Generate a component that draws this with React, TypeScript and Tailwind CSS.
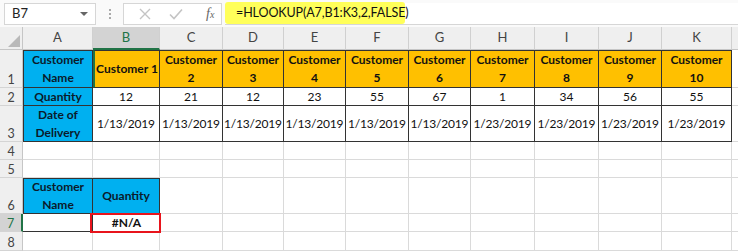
import React from 'react';

const font = { fontFamily: 'Lato, "Liberation Sans", sans-serif' };

const cols = ['A', 'B', 'C', 'D', 'E', 'F', 'G', 'H', 'I', 'J', 'K'];
const widths = ['w-[70px]', 'w-[67px]', 'w-[63px]', 'w-[61px]', 'w-[62px]', 'w-[63px]', 'w-[62px]', 'w-[64px]', 'w-[64px]', 'w-[63px]', 'w-[70px]'];

const quantities = ['12', '21', '12', '23', '55', '67', '1', '34', '56', '55'];
const dates = ['1/13/2019', '1/13/2019', '1/13/2019', '1/13/2019', '1/13/2019', '1/13/2019', '1/23/2019', '1/23/2019', '1/23/2019', '1/23/2019'];

function RowHead({ n, h, active }: { n: number; h: string; active?: boolean }) {
  return (
    <div
      className={`w-[23px] shrink-0 ${h} flex items-end justify-center pb-[1px] text-[12.5px] leading-none border-b border-[#d4d4d4] ${
        active ? 'bg-[#d3d3d3] text-[#217346] border-r-2 border-r-[#217346]' : 'bg-[#efefef] text-[#444] border-r border-r-[#c6c6c6]'
      }`}
    >
      {n}
    </div>
  );
}

function Blank({ i }: { i: number }) {
  return <div className={`${widths[i]} shrink-0 h-full border-r border-b border-[#dadada] bg-white`} />;
}

function Tail() {
  return <div className="flex-1 h-full border-b border-[#dadada] bg-white" />;
}

export default function App() {
  return (
    <div className="w-[738px] h-[251px] overflow-hidden bg-white text-[#111] whitespace-nowrap" style={font}>
      {/* formula bar */}
      <div className="h-[27px] flex items-center bg-[#fafafa]">
        <div className="ml-[4px] w-[92px] h-[22px] bg-white border border-[#d6d6d6] flex items-center justify-between px-[7px] text-[13px] text-[#222]">
          <span>B7</span>
          <span className="w-0 h-0 border-l-[4px] border-r-[4px] border-t-[4px] border-l-transparent border-r-transparent border-t-[#666]" />
        </div>
        <div className="w-[27px] flex flex-col items-center gap-[2px]">
          <span className="w-[2px] h-[2px] bg-[#aaa]" />
          <span className="w-[2px] h-[2px] bg-[#aaa]" />
          <span className="w-[2px] h-[2px] bg-[#aaa]" />
        </div>
        <div className="w-[99px] h-[22px] bg-white border border-[#d6d6d6] flex items-center">
          <svg width="14" height="14" viewBox="0 0 14 14" className="ml-[14px]">
            <path d="M2 2L12 12M12 2L2 12" stroke="#c4c4c4" strokeWidth="1.4" />
          </svg>
          <svg width="16" height="14" viewBox="0 0 16 14" className="ml-[16px]">
            <path d="M2 7.5L6 11.5L14 2.5" stroke="#c4c4c4" strokeWidth="1.6" fill="none" />
          </svg>
          <span className="ml-[22px] text-[14px] italic text-[#666]" style={{ fontFamily: '"Liberation Serif", serif' }}>
            f<span className="text-[10px]">x</span>
          </span>
        </div>
        <div className="ml-[3px] flex-1 h-[22px] bg-white border-b border-[#d6d6d6] flex items-center">
          <div className="h-[22px] w-[180px] bg-[#ffff5a] rounded-[3px] flex items-center pl-[11px] text-[12.5px] text-[#111] tracking-[-0.1px]">
            =HLOOKUP(A7,B1:K3,2,FALSE)
          </div>
        </div>
      </div>

      {/* column headers */}
      <div className="h-[23px] flex bg-[#efefef] text-[13px] text-[#444]">
        <div className="w-[23px] shrink-0 h-full border-r border-b border-[#c6c6c6] flex items-end justify-end p-[2px]">
          <svg width="12" height="12" viewBox="0 0 12 12">
            <path d="M12 0L12 12L0 12Z" fill="#b9b9b9" />
          </svg>
        </div>
        {cols.map((c, i) => (
          <div
            key={c}
            className={`${widths[i]} shrink-0 h-full flex items-center justify-center border-r border-[#d0d0d0] ${
              c === 'B' ? 'bg-[#d3d3d3] text-[#217346] border-b-2 border-b-[#217346]' : 'border-b border-b-[#c6c6c6]'
            }`}
          >
            {c}
          </div>
        ))}
        <div className="flex-1 h-full border-b border-[#c6c6c6]" />
      </div>

      {/* row 1 */}
      <div className="h-[38px] flex">
        <RowHead n={1} h="h-[38px]" />
        <div className="w-[70px] shrink-0 h-full bg-[#00b0f0] border border-[#333] flex flex-col items-center justify-center text-[12px] font-bold leading-[18px] text-[#0b1a2a]">
          <span>Customer</span>
          <span>Name</span>
        </div>
        <div className="w-[67px] shrink-0 h-full bg-[#ffc000] border-t border-r border-b border-[#333] border-l-2 border-l-[#217346] flex items-center justify-center text-[12px] font-bold">
          Customer 1
        </div>
        {cols.slice(2).map((c, k) => (
          <div
            key={c}
            className={`${widths[k + 2]} shrink-0 h-full bg-[#ffc000] border-t border-r border-b border-[#333] flex flex-col items-center justify-center text-[12px] font-bold leading-[18px]`}
          >
            <span>Customer</span>
            <span>{k + 2}</span>
          </div>
        ))}
        <Tail />
      </div>

      {/* row 2 */}
      <div className="h-[18px] flex">
        <RowHead n={2} h="h-[18px]" />
        <div className="w-[70px] shrink-0 h-full bg-[#00b0f0] border-l border-r border-b border-[#333] flex items-center justify-center text-[12px] font-bold text-[#0b1a2a]">
          Quantity
        </div>
        {quantities.map((q, k) => (
          <div key={k} className={`${widths[k + 1]} shrink-0 h-full border-r border-b border-[#333] flex items-center justify-center text-[12px]`}>
            {q}
          </div>
        ))}
        <Tail />
      </div>

      {/* row 3 */}
      <div className="h-[36px] flex">
        <RowHead n={3} h="h-[36px]" />
        <div className="w-[70px] shrink-0 h-full bg-[#00b0f0] border-l border-r border-b border-[#333] flex flex-col items-center justify-center text-[12px] font-bold leading-[18px] text-[#0b1a2a]">
          <span>Date of</span>
          <span>Delivery</span>
        </div>
        {dates.map((d, k) => (
          <div key={k} className={`${widths[k + 1]} shrink-0 h-full border-r border-b border-[#333] flex items-center justify-center text-[12px] tracking-[-0.2px]`}>
            {d}
          </div>
        ))}
        <Tail />
      </div>

      {/* rows 4, 5 */}
      {[4, 5].map(n => (
        <div key={n} className="h-[18px] flex">
          <RowHead n={n} h="h-[18px]" />
          {cols.map((c, i) => (
            <Blank key={c} i={i} />
          ))}
          <Tail />
        </div>
      ))}

      {/* row 6 */}
      <div className="h-[36px] flex">
        <RowHead n={6} h="h-[36px]" />
        <div className="w-[70px] shrink-0 h-full bg-[#00b0f0] border border-[#333] flex flex-col items-center justify-center text-[12px] font-bold leading-[18px] text-[#0b1a2a]">
          <span>Customer</span>
          <span>Name</span>
        </div>
        <div className="w-[67px] shrink-0 h-full bg-[#00b0f0] border-t border-r border-b border-[#333] flex items-center justify-center text-[12px] font-bold text-[#0b1a2a]">
          Quantity
        </div>
        {cols.slice(2).map((c, k) => (
          <Blank key={c} i={k + 2} />
        ))}
        <Tail />
      </div>

      {/* row 7 */}
      <div className="h-[18px] flex">
        <RowHead n={7} h="h-[18px]" active />
        <div className="w-[70px] shrink-0 h-full bg-white border-r border-b border-[#333]" />
        <div className="relative w-[67px] shrink-0 h-full bg-white flex items-center justify-center text-[12px] font-bold">
          <div className="absolute -left-[3px] -top-[1px] -right-[1px] -bottom-[1px] border-2 border-[#e8141c]" />
          #N/A
        </div>
        {cols.slice(2).map((c, k) => (
          <Blank key={c} i={k + 2} />
        ))}
        <Tail />
      </div>

      {/* row 8 */}
      <div className="h-[19px] flex">
        <RowHead n={8} h="h-[19px]" />
        {cols.map((c, i) => (
          <Blank key={c} i={i} />
        ))}
        <Tail />
      </div>
    </div>
  );
}
